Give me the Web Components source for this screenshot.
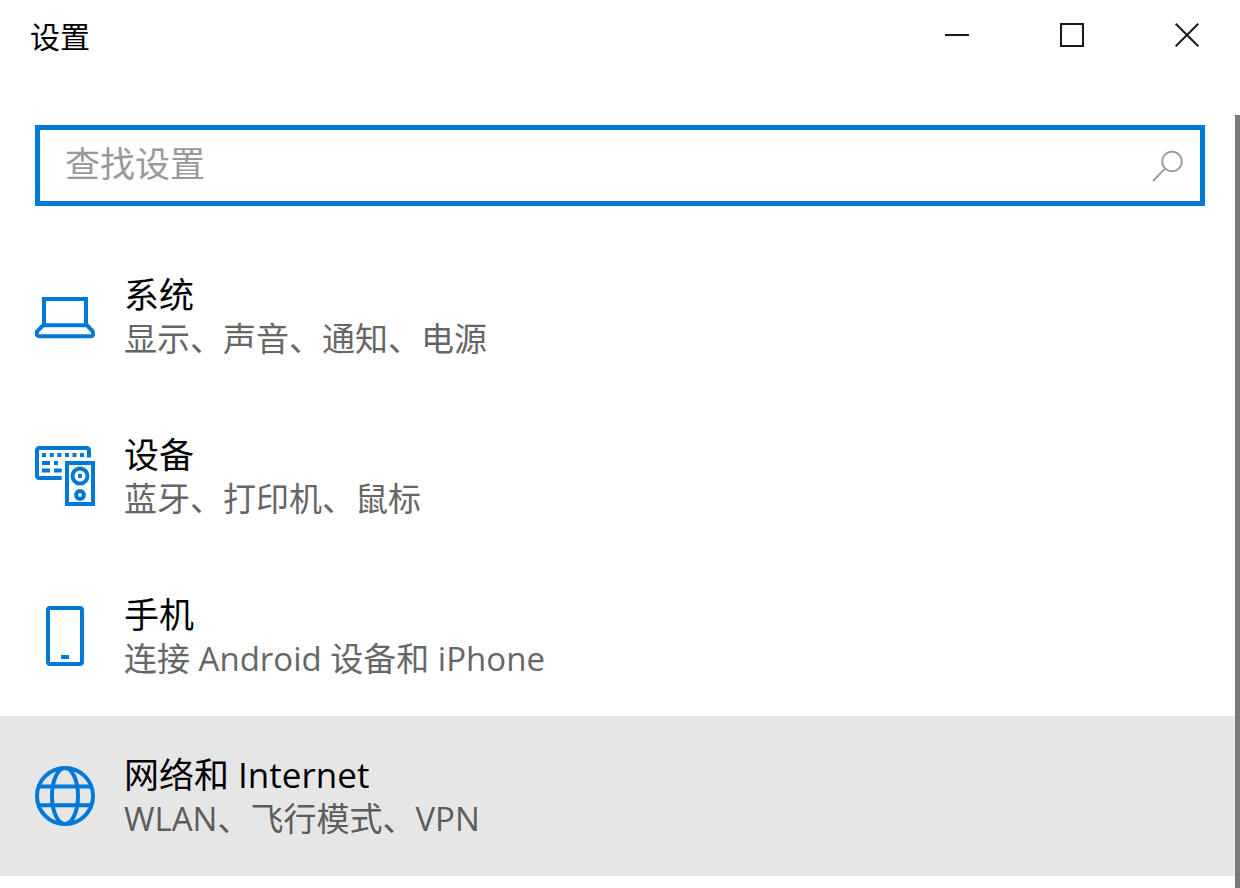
<!DOCTYPE html>
<html lang="zh-CN">
<head>
<meta charset="utf-8">
<meta name="viewport" content="width=device-width, initial-scale=1">
<title>设置</title>
<style>
  body {
    margin: 0;
    background: #fff;
    color: #000;
    font-family: "Open Sans", "Noto Sans CJK SC", sans-serif;
    --accent: #0078d7;
  }
</style>
</head>
<body>
<settings-window>
  <title-bar slot="bar">设置</title-bar>
  <search-box placeholder="查找设置"></search-box>
  <category-list>
    <category-item icon="system" href="#system">系统<span slot="detail">显示、声音、通知、电源</span></category-item>
    <category-item icon="devices" href="#devices">设备<span slot="detail">蓝牙、打印机、鼠标</span></category-item>
    <category-item icon="phone" href="#phone">手机<span slot="detail">连接 Android 设备和 iPhone</span></category-item>
    <category-item icon="network" href="#network" active>网络和 Internet<span slot="detail">WLAN、飞行模式、VPN</span></category-item>
  </category-list>
</settings-window>
<script>
  const attach = (el, html) => {
    const t = document.createElement('template');
    t.innerHTML = html;
    el.attachShadow({ mode: 'open' }).append(t.content.cloneNode(true));
  };

  customElements.define('settings-window', class extends HTMLElement {
    constructor() {
      super();
      attach(this, `
        <style>
          :host { display: flex; flex-direction: column; min-height: 100vh; }
          .body { display: flex; flex: 1; margin-top: 45px; }
          main { flex: 1; min-width: 0; padding-top: 10px; }
          .track { width: 5px; background: #7a7a7a; }
        </style>
        <slot name="bar"></slot>
        <div class="body">
          <main><slot></slot></main>
          <div class="track"></div>
        </div>`);
    }
  });

  customElements.define('title-bar', class extends HTMLElement {
    constructor() {
      super();
      attach(this, `
        <style>
          :host { display: flex; align-items: center; height: 70px; padding-left: 30px; }
          h1 { flex: 1; margin: 0; padding-top: 4px; font-size: 30px; line-height: 40px; font-weight: 400; }
          .controls { display: flex; gap: 9px; align-self: stretch; }
          button { width: 106px; padding: 0; border: 0; background: none; display: grid; place-items: center; color: #1a1a1a; }
          svg { display: block; fill: none; stroke: currentColor; stroke-width: 2; }
        </style>
        <h1><slot></slot></h1>
        <div class="controls">
          <button aria-label="最小化"><svg width="24" height="24"><path d="M0 12H24"/></svg></button>
          <button aria-label="最大化"><svg width="24" height="24"><path d="M1 1H23V23H1Z"/></svg></button>
          <button aria-label="关闭"><svg width="24" height="24"><path d="M.7 .7 23.3 23.3M23.3 .7 .7 23.3"/></svg></button>
        </div>`);
    }
  });

  customElements.define('search-box', class extends HTMLElement {
    constructor() {
      super();
      attach(this, `
        <style>
          :host { display: block; margin: 0 30px 30px 35px; }
          form { display: flex; align-items: center; height: 71px; border: 5px solid var(--accent); background: #fff; }
          input { flex: 1; min-width: 0; height: 60px; box-sizing: border-box; padding: 0 0 4px 25px; border: 0; outline: 0; background: none; font: inherit; font-size: 35px; color: #000; }
          input::placeholder { color: #999; opacity: 1; }
          button { padding: 0 16px 0 0; border: 0; background: none; color: #999; }
          svg { display: block; fill: none; stroke: currentColor; stroke-width: 1.8; }
        </style>
        <form role="search">
          <input type="text">
          <button type="button" aria-label="搜索"><svg width="32" height="32"><circle cx="20" cy="11.5" r="9.8"/><path d="M13.2 18.4 1 31"/></svg></button>
        </form>`);
    }
    connectedCallback() {
      const input = this.shadowRoot.querySelector('input');
      input.placeholder = this.getAttribute('placeholder');
      input.setAttribute('aria-label', input.placeholder);
    }
  });

  customElements.define('category-list', class extends HTMLElement {
    constructor() {
      super();
      attach(this, `
        <style>
          :host { display: block; }
          nav { display: flex; flex-direction: column; }
        </style>
        <nav aria-label="设置"><slot></slot></nav>`);
    }
  });

  const icons = {
    system: '<path d="M9 38V13H51V38M7 39.300H52L57.500 45Q59 50.200 56 50.200H4Q1 50.200 2 45.500L8 39.300"/>',
    devices: `<path d="M26.700 32H4.500Q2 32 2 29.500V4.500Q2 2 4.500 2H51.500Q54 2 54 4.500V11.500"/>
      <path d="M32 17H58V58H32Z"/><circle cx="45" cy="30" r="7.500"/><circle cx="45" cy="49" r="3.900"/>
      <g class="solid"><circle cx="45" cy="30" r="2.300"/>
      <path d="M7 7h4v4h-4zM14.700 7h4v4h-4zM22.300 7h4v4h-4zM30 7h4v4h-4zM37.500 7h4v4h-4zM45 7h4v4h-4zM7 15h8v4h-8zM19 15h4v4h-4zM7 22.600h8v4h-8zM19 22.600h7.700v4h-7.700z"/></g>`,
    phone: '<rect x="13" y="2" width="34" height="56" rx="2"/><path class="solid" d="M26 49h8v4h-8z"/>',
    network: '<circle cx="30" cy="30" r="28"/><ellipse cx="30" cy="30" rx="13" ry="28"/><path d="M4 20.500H56M4 39.300H56"/>'
  };

  customElements.define('category-item', class extends HTMLElement {
    constructor() {
      super();
      attach(this, `
        <style>
          :host { display: block; }
          :host([active]) { background: #e6e6e6; --detail: #5c5c5c; }
          a { display: flex; align-items: center; gap: 29px; min-height: 160px; padding: 0 35px; box-sizing: border-box; color: inherit; text-decoration: none; }
          svg { flex: none; width: 60px; height: 60px; fill: none; stroke: var(--accent); stroke-width: 4; }
          .solid { fill: var(--accent); stroke: none; }
          .text { display: flex; flex-direction: column; padding-top: 2px; }
          .name { font-size: 35px; line-height: 44px; }
          .detail { font-size: 33px; line-height: 44px; color: var(--detail, #666); }
        </style>
        <a>
          <svg viewBox="0 0 60 60" aria-hidden="true"></svg>
          <span class="text">
            <span class="name"><slot></slot></span>
            <span class="detail"><slot name="detail"></slot></span>
          </span>
        </a>`);
    }
    connectedCallback() {
      const root = this.shadowRoot;
      root.querySelector('a').href = this.getAttribute('href');
      root.querySelector('svg').innerHTML = icons[this.getAttribute('icon')];
    }
  });
</script>
</body>
</html>
